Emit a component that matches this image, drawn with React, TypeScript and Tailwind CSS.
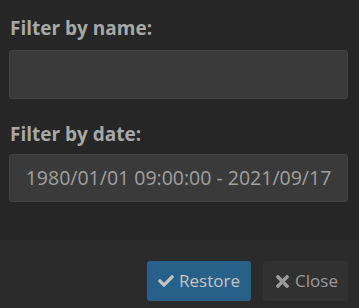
import { FaCheck, FaTimes } from "react-icons/fa";

export default function App() {
  return (
    <div className="w-[359px] h-[308px] bg-[#262626] flex flex-col" style={{ fontFamily: '"Open Sans", sans-serif' }}>
      <div className="px-[9px] pt-[15px] h-[240px]">
        <label className="block pl-px text-[19px] font-bold text-[#a8a8a8] leading-[26px]">Filter by name:</label>
        <input
          type="text"
          className="mt-[9px] block w-[339px] h-[49px] rounded-[3px] bg-[#3a3a3a] border border-[#434343] outline-none"
        />
        <label className="block pl-px mt-[22px] text-[19px] font-bold text-[#a8a8a8] leading-[26px]">Filter by date:</label>
        <div className="mt-[7px] w-[339px] h-[48px] rounded-[3px] bg-[#3a3a3a] border border-[#434343] flex items-center justify-center text-[19.5px] text-[#a0a0a0] whitespace-nowrap overflow-hidden">
          1980/01/01 09:00:00 - 2021/09/17
        </div>
      </div>
      <div className="flex-1 bg-[#2a2a2a] flex justify-end items-start gap-[12px] pt-[21px] pr-[11px]">
        <button className="h-[40px] w-[104px] rounded-[3px] bg-[#27618a] text-[#c4c4c4] text-[17px] flex items-center justify-center gap-[5px]">
          <FaCheck size={16} />
          Restore
        </button>
        <button className="h-[40px] w-[85px] rounded-[3px] bg-[#313131] text-[#9a9a9a] text-[17px] flex items-center justify-center gap-[3px]">
          <FaTimes size={19} />
          Close
        </button>
      </div>
    </div>
  );
}
